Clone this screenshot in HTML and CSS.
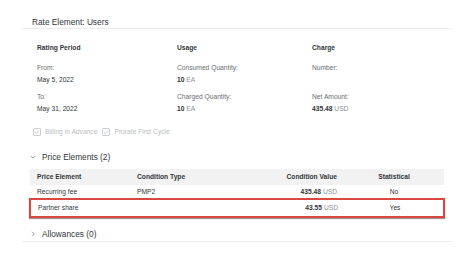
FILE: index.html
```html
<!DOCTYPE html>
<html lang="en">
<head>
  <meta charset="UTF-8" />
  <meta name="viewport" content="width=device-width, initial-scale=1.0" />
  <title>Rate Element: Users</title>
  <link rel="stylesheet" href="styles.css">
</head>
<body>

<div class="page">
  <div class="title">Rate Element: Users</div>

  <!-- 概要 -->
  <div class="summary">
    <div class="col">
      <div class="col-head">Rating Period</div>
      <div class="label">From:</div>
      <div class="value">May 5, 2022</div>
      <div class="label gap">To:</div>
      <div class="value">May 31, 2022</div>
    </div>
    <div class="col">
      <div class="col-head">Usage</div>
      <div class="label">Consumed Quantity:</div>
      <div class="value"><b>10</b> <span class="unit">EA</span></div>
      <div class="label gap">Charged Quantity:</div>
      <div class="value"><b>10</b> <span class="unit">EA</span></div>
    </div>
    <div class="col">
      <div class="col-head">Charge</div>
      <div class="label">Number:</div>
      <div class="value"></div>
      <div class="label gap">Net Amount:</div>
      <div class="value"><b>435.48</b> <span class="unit">USD</span></div>
    </div>
  </div>

  <div class="checks">
    <span class="check"><span class="box">
      <svg viewBox="0 0 8 8" width="6" height="6"><path d="M1.2 4.2 L3.2 6 L6.8 1.8" fill="none" stroke="#b5b9bd" stroke-width="1"/></svg>
    </span>Billing in Advance</span>
    <span class="check"><span class="box">
      <svg viewBox="0 0 8 8" width="6" height="6"><path d="M1.2 4.2 L3.2 6 L6.8 1.8" fill="none" stroke="#b5b9bd" stroke-width="1"/></svg>
    </span>Prorate First Cycle</span>
  </div>

  <!-- 価格要素 -->
  <div class="section-head">
    <svg class="chev" viewBox="0 0 8 8" width="6" height="6"><path d="M1 2.5 L4 5.5 L7 2.5" fill="none" stroke="#6a6d70" stroke-width="0.9"/></svg>
    Price Elements (2)
  </div>

  <div class="table">
    <div class="row head">
      <div class="cell">Price Element</div>
      <div class="cell">Condition Type</div>
      <div class="cell num">Condition Value</div>
      <div class="cell mid">Statistical</div>
    </div>
    <div class="row">
      <div class="cell">Recurring fee</div>
      <div class="cell">PMP2</div>
      <div class="cell num"><b>435.48</b> <span class="unit">USD</span></div>
      <div class="cell mid">No</div>
    </div>
    <div class="row marked">
      <div class="cell">Partner share</div>
      <div class="cell"></div>
      <div class="cell num"><b>43.55</b> <span class="unit">USD</span></div>
      <div class="cell mid">Yes</div>
    </div>
  </div>

  <div class="section-head last">
    <svg class="chev" viewBox="0 0 8 8" width="6" height="6"><path d="M2.8 1 L5.8 4 L2.8 7" fill="none" stroke="#6a6d70" stroke-width="0.9"/></svg>
    Allowances (0)
  </div>
</div>

</body>
</html>
```

FILE: styles.css
```css
html, body {
  margin: 0;
  padding: 0;
  background: #fff;
  font-family: "Liberation Sans", Arial, sans-serif;
  font-size: 6.7px;
  color: #32363a;
}
.page {
  width: 430px;
  margin-left: 22px;
  padding-top: 16px;
}
.title {
  font-size: 8.3px;
  line-height: 12px;
  padding-left: 10px;
  border-bottom: 1px solid #ececec;
}
.summary {
  display: grid;
  grid-template-columns: 140px 135px 1fr;
  padding-left: 15px;
  margin-top: 14px;
}
.col-head {
  font-weight: bold;
  line-height: 10px;
  margin-bottom: 10px;
}
.label {
  color: #6a6d70;
  line-height: 10px;
}
.label.gap {
  margin-top: 7px;
}
.value {
  line-height: 10px;
  height: 10px;
  margin-top: 2px;
}
.value b, .cell b {
  font-weight: bold;
}
.unit {
  color: #8c9196;
}
.checks {
  display: flex;
  gap: 5px;
  padding-left: 11px;
  margin-top: 13px;
  line-height: 10px;
  color: #b9bcc0;
}
.check {
  display: flex;
  align-items: center;
}
.box {
  width: 6px;
  height: 6px;
  border: 1px solid #ccd0d3;
  border-radius: 1px;
  margin-right: 4px;
  display: flex;
  align-items: center;
  justify-content: center;
}
.section-head {
  display: flex;
  align-items: center;
  font-size: 8.3px;
  line-height: 12px;
  padding-left: 8px;
  margin-top: 14px;
}
.section-head .chev {
  margin-right: 6px;
}
.section-head.last {
  margin-top: 10px;
  padding-bottom: 1px;
  border-bottom: 1px solid #ececec;
}
.table {
  width: 414px;
  margin-left: 8px;
  margin-top: 5.5px;
}
.row {
  display: grid;
  grid-template-columns: 100px 120px 94px 100px;
  align-items: center;
  height: 12.5px;
}
.row.head {
  height: 16.5px;
  background: #f2f2f2;
  font-weight: bold;
}
.row.marked {
  height: 16px;
  margin: 0 -1px;
  border: 2px solid #d9483f;
  box-shadow: 0 1px 1px rgba(60, 20, 20, 0.45);
}
.cell {
  padding: 0 7px;
  white-space: nowrap;
}
.cell.num {
  text-align: right;
}
.cell.mid {
  text-align: center;
}
```
